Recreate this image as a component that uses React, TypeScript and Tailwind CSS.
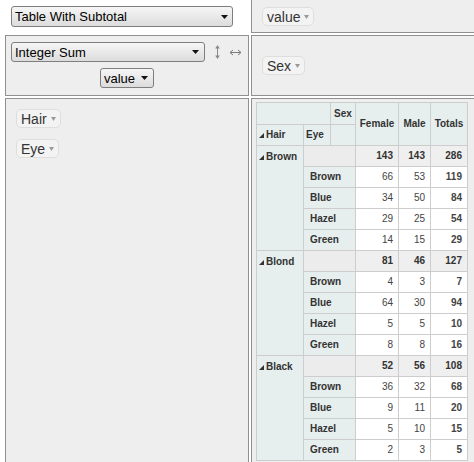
import React from "react";

type Row = [string, number, number, number];

const groups: { hair: string; total: [number, number, number]; rows: Row[] }[] = [
  {
    hair: "Brown",
    total: [143, 143, 286],
    rows: [
      ["Brown", 66, 53, 119],
      ["Blue", 34, 50, 84],
      ["Hazel", 29, 25, 54],
      ["Green", 14, 15, 29],
    ],
  },
  {
    hair: "Blond",
    total: [81, 46, 127],
    rows: [
      ["Brown", 4, 3, 7],
      ["Blue", 64, 30, 94],
      ["Hazel", 5, 5, 10],
      ["Green", 8, 8, 16],
    ],
  },
  {
    hair: "Black",
    total: [52, 56, 108],
    rows: [
      ["Brown", 36, 32, 68],
      ["Blue", 9, 11, 20],
      ["Hazel", 5, 10, 15],
      ["Green", 2, 3, 5],
    ],
  },
];

function Caret() {
  return (
    <svg width="7" height="4" viewBox="0 0 7 4" className="shrink-0">
      <path d="M0 0h7L3.5 4z" fill="#111" />
    </svg>
  );
}

function FakeSelect({ label, className }: { label: string; className: string }) {
  return (
    <div
      className={`flex items-center justify-between rounded-[3px] border border-[#7e7e7e] bg-gradient-to-b from-[#f6f6f6] to-[#dcdcdc] pl-[3px] text-[13px] leading-none text-black ${className}`}
    >
      <span>{label}</span>
      <Caret />
    </div>
  );
}

function Pill({ label }: { label: string }) {
  return (
    <span className="inline-flex h-[19px] items-center rounded-[5px] border border-[#dedede] bg-[#f3f3f3] pl-[4px] pr-[4px] text-[14px] leading-none text-[#333]">
      {label}
      <svg width="5" height="4" viewBox="0 0 5 4" className="ml-[4px]">
        <path d="M0 0h5L2.5 4z" fill="#9a9a9a" />
      </svg>
    </span>
  );
}

function Expander() {
  return (
    <svg width="5" height="5" viewBox="0 0 5 5" className="mr-[2px] inline-block align-[0px]">
      <path d="M5 0v5H0z" fill="#333" />
    </svg>
  );
}

const th = "border border-[#cdcdcd] bg-[#e6eeee] text-[10px] font-bold leading-[12px] text-[#333]";
const td = "border border-[#cdcdcd] bg-white pr-[5px] text-right text-[10px] leading-[12px] text-[#444]";
const sub = "border border-[#cdcdcd] bg-[#efefef] pr-[5px] text-right text-[10px] font-bold leading-[12px] text-[#333]";

function PivotTable() {
  return (
    <table className="table-fixed border-collapse">
      <colgroup>
        <col className="w-[47px]" />
        <col className="w-[27px]" />
        <col className="w-[25px]" />
        <col className="w-[43px]" />
        <col className="w-[32px]" />
        <col className="w-[37px]" />
      </colgroup>
      <thead>
        <tr className="h-[22px]">
          <th colSpan={2} className={th}></th>
          <th className={`${th} text-center`}>Sex</th>
          <th rowSpan={2} className={`${th} text-center`}>Female</th>
          <th rowSpan={2} className={`${th} text-center`}>Male</th>
          <th rowSpan={2} className={`${th} text-center`}>Totals</th>
        </tr>
        <tr className="h-[21px]">
          <th className={`${th} pl-[2px] text-left`}>
            <Expander />
            Hair
          </th>
          <th className={`${th} pl-[2px] text-left`}>Eye</th>
          <th className={th}></th>
        </tr>
      </thead>
      <tbody>
        {groups.map((g) => (
          <React.Fragment key={g.hair}>
            <tr className="h-[21px]">
              <th rowSpan={5} className={`${th} pl-[2px] pt-[5px] text-left align-top`}>
                <Expander />
                {g.hair}
              </th>
              <th colSpan={2} className="border border-[#cdcdcd] bg-[#ececec]"></th>
              {g.total.map((v, i) => (
                <td key={i} className={sub}>
                  {v}
                </td>
              ))}
            </tr>
            {g.rows.map(([eye, f, m, t]) => (
              <tr key={eye} className="h-[21px]">
                <th colSpan={2} className={`${th} pl-[6px] text-left`}>
                  {eye}
                </th>
                <td className={td}>{f}</td>
                <td className={td}>{m}</td>
                <td className={`${td} font-bold text-[#333]`}>{t}</td>
              </tr>
            ))}
          </React.Fragment>
        ))}
      </tbody>
    </table>
  );
}

export default function App() {
  return (
    <div className="h-[462px] w-[474px] overflow-hidden bg-white font-['Liberation_Sans',Arial,sans-serif]">
      <div className="-mt-[3px] grid grid-cols-[244px_240px] grid-rows-[36px_61px_400px] gap-[2px] pl-[5px]">
        {/* renderer */}
        <div className="pl-[6px] pt-[9px]">
          <FakeSelect label="Table With Subtotal" className="h-[21px] w-[222px] pr-[4px]" />
        </div>

        {/* unused attrs */}
        <div className="flex items-center border border-[#909090] bg-[#eeeeee] pl-[10px] pt-[3px]">
          <Pill label="value" />
        </div>

        {/* aggregator */}
        <div className="flex flex-col border border-[#909090] bg-[#eeeeee] px-[5px] pt-[6px]">
          <div className="flex items-center">
            <FakeSelect label="Integer Sum" className="h-[20px] w-[197px] pr-[5px]" />
            <span className="ml-[5px] flex w-[15px] justify-center">
              <svg width="7" height="16" viewBox="0 0 7 16">
                <path d="M3.5 2v12" stroke="#8a8a8a" strokeWidth="1" />
                <path d="M1.2 4.5L3.5 1l2.3 3.5zM1.2 11.5L3.5 15l2.3-3.5z" fill="#8a8a8a" />
              </svg>
            </span>
            <span className="ml-[3px] flex w-[15px] justify-center">
              <svg width="13" height="7" viewBox="0 0 13 7">
                <path d="M1 3.5h11" stroke="#7a7a7a" strokeWidth="1" />
                <path d="M4 1L1 3.5L4 6M9 1l3 2.5L9 6" fill="none" stroke="#7a7a7a" strokeWidth="1" />
              </svg>
            </span>
          </div>
          <div className="mt-[6px] flex justify-center">
            <FakeSelect label="value" className="h-[20px] w-[54px] pr-[5px]" />
          </div>
        </div>

        {/* cols */}
        <div className="flex items-center border border-[#909090] bg-[#eeeeee] pl-[10px]">
          <Pill label="Sex" />
        </div>

        {/* rows */}
        <div className="flex flex-col items-start gap-[11px] border border-[#909090] bg-[#eeeeee] pl-[10px] pt-[10px]">
          <Pill label="Hair" />
          <Pill label="Eye" />
        </div>

        {/* output */}
        <div className="border border-[#909090] bg-[#eeeeee] pl-[4px] pt-[3px]">
          <PivotTable />
        </div>
      </div>
    </div>
  );
}
